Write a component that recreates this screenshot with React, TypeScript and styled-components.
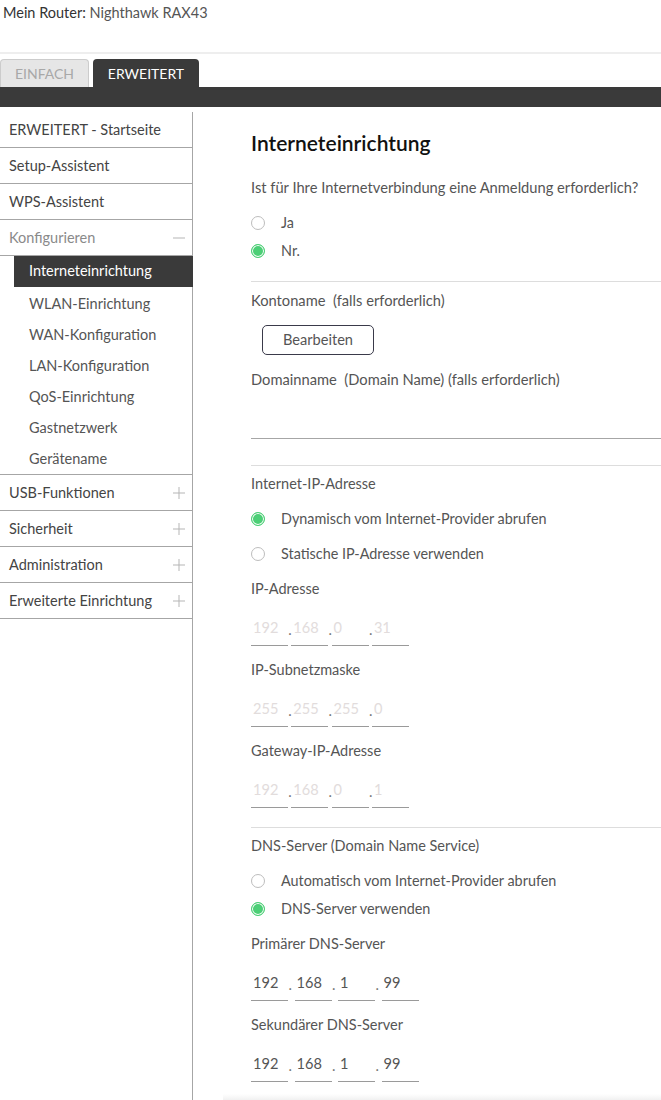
import React from "react";
import styled, { createGlobalStyle } from "styled-components";

const Global = createGlobalStyle`
  html, body { margin: 0; padding: 0; background: #fff; }
  body { font-family: Lato, "Open Sans", sans-serif; font-size: 14.6px; color: #4a4a4a; }
  * { box-sizing: border-box; }
`;
const Page = styled.div`
  position: relative; width: 661px; height: 1100px; overflow: hidden; background: #fff;
`;
const Header = styled.header`
  height: 54px; padding: 4px 3px 0; font-size: 14.5px; line-height: 17px; border-bottom: 2px solid #eeeeee;
`;
const RouterLabel = styled.span` color: #333; `;
const RouterName = styled.span` color: #555; `;
const TabBar = styled.nav`
  display: flex; gap: 4px; height: 28px; margin-top: 5px; align-items: flex-end;
`;
const Tab = styled.div<{ $active?: boolean }>`
  height: 28px;
  width: ${p => (p.$active ? "106px" : "89px")};
  display: flex; align-items: center; justify-content: center;
  border-radius: 4px 4px 0 0; font-size: 14px;
  background: ${p => (p.$active ? "#3a3a3a" : "#e6e6e6")};
  color: ${p => (p.$active ? "#fff" : "#a8a8a8")};
  border: ${p => (p.$active ? "none" : "1px solid #cccccc")};
  border-bottom: none;
`;
const DarkBar = styled.div` height: 20px; background: #3a3a3a; `;
const Body = styled.div` display: flex; margin-top: 5px; height: 993px; `;
const Sidebar = styled.aside` width: 193px; flex: none; border-right: 1px solid #a6a6a6; `;
const MenuItem = styled.div<{ $muted?: boolean }>`
  height: 36px; padding: 0 7px 0 9px; display: flex; align-items: center; justify-content: space-between;
  border-bottom: 1px solid #a6a6a6; font-size: 14.5px; line-height: 18px; color: ${p => (p.$muted ? "#8a8a8a" : "#444")};
`;
const SubMenu = styled.div` padding: 0 0 0 14px; border-bottom: 1px solid #a6a6a6; height: 219px; margin-right: -1px; `;
const SubItem = styled.div<{ $active?: boolean }>`
  height: 31px; padding: ${p => (p.$active ? "0 0 2px 15px" : "1px 0 0 15px")}; display: flex; align-items: center; font-size: 14.5px;
  background: ${p => (p.$active ? "#3a3a3a" : "transparent")};
  color: ${p => (p.$active ? "#fff" : "#555")};
`;
const ToggleIcon = styled.svg` width: 12px; height: 12px; flex: none; stroke: #b5b5b5; stroke-width: 1; `;
const Main = styled.main` flex: 1; padding: 0 0 0 58px; min-width: 0; `;
const Title = styled.h1`
  margin: 17px 0 0; height: 28px; font-size: 21px; font-weight: 600; line-height: 28px; color: #111;
`;
const Row = styled.div<{ $mt?: number; $size?: number }>`
  height: 20px; margin-top: ${p => p.$mt ?? 0}px; display: flex; align-items: center; line-height: 18px;
  font-size: ${p => p.$size ?? 14.5}px; color: #555; white-space: nowrap;
`;
const RadioDot = styled.span<{ $on?: boolean }>`
  width: 14px; height: 14px; border-radius: 50%; flex: none; margin-right: 16px;
  border: 1px solid ${p => (p.$on ? "#4ccf76" : "#bdbdbd")};
  background: ${p => (p.$on ? "#4ccf76" : "#fff")};
  box-shadow: ${p => (p.$on ? "inset 0 0 0 1px #fff" : "none")};
`;
const Divider = styled.hr<{ $mt: number }>`
  margin: ${p => p.$mt}px 0 0; border: none; border-top: 1px solid #dddddd; height: 1px;
`;
const EditButton = styled.button`
  display: block; width: 112px; height: 30px; margin: 15px 0 0 11px; border: 1px solid #3a3a4a; border-radius: 5px;
  background: #fff; font: 14.6px/18px Lato, sans-serif; color: #555; padding: 0;
`;
const LineInput = styled.div`
  height: 1px; margin-top: 49px; background: #a6a6a6;
`;
const IpRow = styled.div<{ $gaps: number }>`
  display: flex; gap: ${p => p.$gaps}px; height: 37px; margin-top: 10px;
`;
const Octet = styled.div<{ $dim?: boolean }>`
  position: relative; width: 37px; height: 37px; border-bottom: 1px solid #9a9a9a; padding: 10px 0 0 2px; line-height: 17px;
  font-size: 14.6px; color: ${p => (p.$dim ? "#e2dcdc" : "#555")};
`;
const Dot = styled.span`
  position: absolute; left: -3px; top: 12px; line-height: 17px; color: #777;
`;
const DnsDot = styled(Dot)` left: -6px; `;
const BottomShadow = styled.div`
  position: absolute; left: 223px; right: 0; bottom: 0; height: 6px;
  background: linear-gradient(#ffffff, #f1f1f1);
`;

const Plus = () => (
  <ToggleIcon viewBox="0 0 12 12"><path d="M0 6h12M6 0v12" /></ToggleIcon>
);
const Minus = () => (
  <ToggleIcon viewBox="0 0 12 12"><path d="M0 6h12" /></ToggleIcon>
);

const Ip = ({ v, dim, dns }: { v: string[]; dim?: boolean; dns?: boolean }) => (
  <IpRow $gaps={dns ? 6.5 : 3.3}>
    {v.map((o, i) => (
      <Octet key={i} $dim={dim}>
        {i > 0 && (dns ? <DnsDot>.</DnsDot> : <Dot>.</Dot>)}
        {o}
      </Octet>
    ))}
  </IpRow>
);

const subs = ["Interneteinrichtung", "WLAN-Einrichtung", "WAN-Konfiguration", "LAN-Konfiguration", "QoS-Einrichtung", "Gastnetzwerk", "Gerätename"];

export default function App() {
  return (
    <Page>
      <Global />
      <Header><RouterLabel>Mein Router:</RouterLabel> <RouterName>Nighthawk RAX43</RouterName></Header>
      <TabBar>
        <Tab>EINFACH</Tab>
        <Tab $active>ERWEITERT</Tab>
      </TabBar>
      <DarkBar />
      <Body>
        <Sidebar>
          <MenuItem>ERWEITERT - Startseite</MenuItem>
          <MenuItem>Setup-Assistent</MenuItem>
          <MenuItem>WPS-Assistent</MenuItem>
          <MenuItem $muted>Konfigurieren<Minus /></MenuItem>
          <SubMenu>
            {subs.map((s, i) => <SubItem key={s} $active={i === 0}>{s}</SubItem>)}
          </SubMenu>
          <MenuItem>USB-Funktionen<Plus /></MenuItem>
          <MenuItem>Sicherheit<Plus /></MenuItem>
          <MenuItem>Administration<Plus /></MenuItem>
          <MenuItem>Erweiterte Einrichtung<Plus /></MenuItem>
        </Sidebar>
        <Main>
          <Title>Interneteinrichtung</Title>
          <Row $mt={20} $size={14.7}>Ist für Ihre Internetverbindung eine Anmeldung erforderlich?</Row>
          <Row $mt={16} $size={14.4}><RadioDot />Ja</Row>
          <Row $mt={8} $size={14.4}><RadioDot $on />Nr.</Row>
          <Divider $mt={20} />
          <Row $mt={8} $size={14.7}>Kontoname&nbsp; (falls erforderlich)</Row>
          <EditButton>Bearbeiten</EditButton>
          <Row $mt={14} $size={14.7}>Domainname&nbsp; (Domain Name) (falls erforderlich)</Row>
          <LineInput />
          <Divider $mt={26} />
          <Row $mt={8}>Internet-IP-Adresse</Row>
          <Row $mt={15} $size={14.4}><RadioDot $on />Dynamisch vom Internet-Provider abrufen</Row>
          <Row $mt={15} $size={14.4}><RadioDot />Statische IP-Adresse verwenden</Row>
          <Row $mt={15}>IP-Adresse</Row>
          <Ip dim v={["192", "168", "0", "31"]} />
          <Row $mt={14}>IP-Subnetzmaske</Row>
          <Ip dim v={["255", "255", "255", "0"]} />
          <Row $mt={14}>Gateway-IP-Adresse</Row>
          <Ip dim v={["192", "168", "0", "1"]} />
          <Divider $mt={19} />
          <Row $mt={8}>DNS-Server (Domain Name Service)</Row>
          <Row $mt={15} $size={14.4}><RadioDot />Automatisch vom Internet-Provider abrufen</Row>
          <Row $mt={8} $size={14.4}><RadioDot $on />DNS-Server verwenden</Row>
          <Row $mt={15}>Primärer DNS-Server</Row>
          <Ip dns v={["192", "168", "1", "99"]} />
          <Row $mt={14}>Sekundärer DNS-Server</Row>
          <Ip dns v={["192", "168", "1", "99"]} />
        </Main>
      </Body>
      <BottomShadow />
    </Page>
  );
}
